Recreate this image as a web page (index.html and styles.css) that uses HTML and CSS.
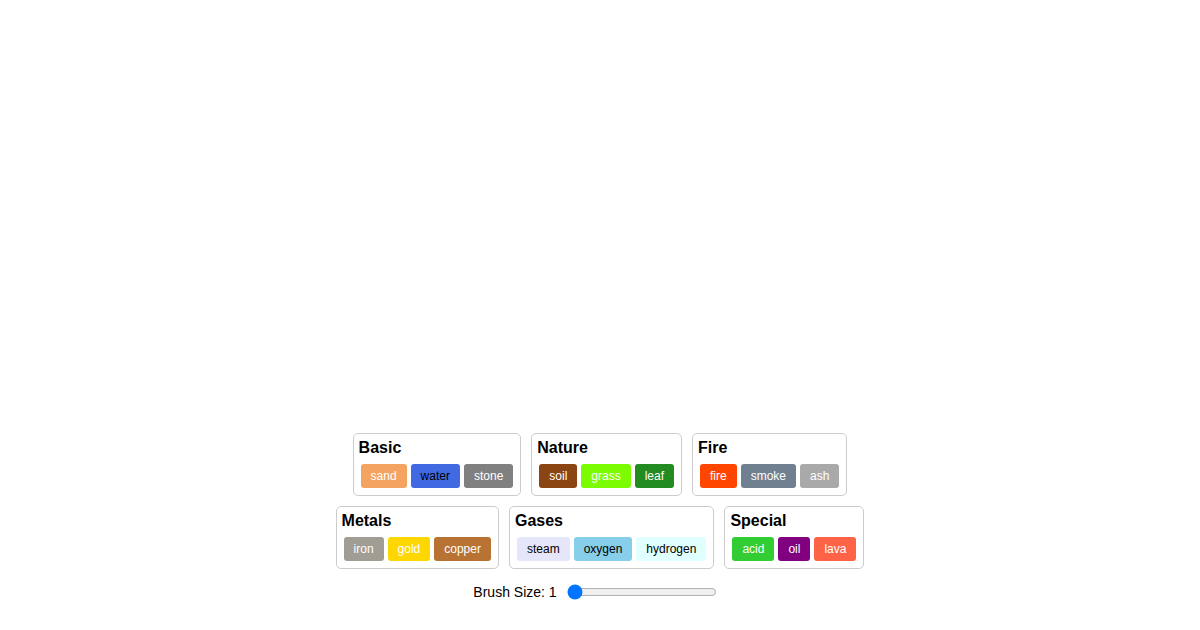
FILE: index.html
```html
<!DOCTYPE html>
<html lang="en">
<head>
<meta charset="utf-8">
<title>Falling Sand</title>
<link rel="stylesheet" href="styles.css">
</head>
<body>
<canvas class="stage"></canvas>
<div class="controls">
  <div class="group">
    <h3 class="group-title">Basic</h3>
    <div class="buttons">
      <button class="el el-sand">sand</button>
      <button class="el el-water">water</button>
      <button class="el el-stone">stone</button>
    </div>
  </div>
  <div class="group">
    <h3 class="group-title">Nature</h3>
    <div class="buttons">
      <button class="el el-soil">soil</button>
      <button class="el el-grass">grass</button>
      <button class="el el-leaf">leaf</button>
    </div>
  </div>
  <div class="group">
    <h3 class="group-title">Fire</h3>
    <div class="buttons">
      <button class="el el-fire">fire</button>
      <button class="el el-smoke">smoke</button>
      <button class="el el-ash">ash</button>
    </div>
  </div>
  <div class="group">
    <h3 class="group-title">Metals</h3>
    <div class="buttons">
      <button class="el el-iron">iron</button>
      <button class="el el-gold">gold</button>
      <button class="el el-copper">copper</button>
    </div>
  </div>
  <div class="group">
    <h3 class="group-title">Gases</h3>
    <div class="buttons">
      <button class="el el-steam">steam</button>
      <button class="el el-oxygen">oxygen</button>
      <button class="el el-hydrogen">hydrogen</button>
    </div>
  </div>
  <div class="group">
    <h3 class="group-title">Special</h3>
    <div class="buttons">
      <button class="el el-acid">acid</button>
      <button class="el el-oil">oil</button>
      <button class="el el-lava">lava</button>
    </div>
  </div>
</div>
<div class="brush">
  <label class="brush-label" for="brush">Brush Size: <span>1</span></label>
  <input class="brush-range" id="brush" type="range" min="1" max="10" value="1">
</div>
</body>
</html>
```

FILE: styles.css
```css
html, body {
  margin: 0;
  padding: 0;
  background: #fff;
  font-family: "Liberation Sans", Arial, sans-serif;
  color: #000;
}

.stage {
  display: block;
  width: 1200px;
  height: 433px;
  background: #fff;
}

.controls {
  width: 600px;
  margin: 0 auto;
  display: flex;
  flex-wrap: wrap;
  justify-content: center;
  gap: 10px;
}

.group {
  border: 1px solid #ccc;
  border-radius: 5px;
  padding: 5px;
}

.group-title {
  margin: 0 0 5px 0;
  font-size: 16px;
  font-weight: bold;
  line-height: 18px;
}

.buttons {
  display: flex;
}

.el {
  margin: 2px;
  padding: 0 10px;
  height: 24px;
  border: none;
  border-radius: 3px;
  font-family: "Liberation Sans", Arial, sans-serif;
  font-size: 12px;
  color: #fff;
  cursor: pointer;
}

.el-sand { background: #f4a460; }
.el-water { background: #4169e1; color: #000; }
.el-stone { background: #808080; }
.el-soil { background: #8b4513; }
.el-grass { background: #7cfc00; }
.el-leaf { background: #228b22; }
.el-fire { background: #ff4500; }
.el-smoke { background: #708090; }
.el-ash { background: #a9a9a9; }
.el-iron { background: #a19d94; }
.el-gold { background: #ffd700; }
.el-copper { background: #b87333; }
.el-steam { background: #e6e6fa; color: #000; }
.el-oxygen { background: #87ceeb; color: #000; }
.el-hydrogen { background: #e0ffff; color: #000; }
.el-acid { background: #32cd32; }
.el-oil { background: #800080; }
.el-lava { background: #ff6347; }

.brush {
  display: flex;
  justify-content: center;
  align-items: center;
  gap: 8px;
  margin-top: 13px;
  padding-right: 8px;
}

.brush-label {
  font-size: 14px;
}

.brush-range {
  width: 150px;
  margin: 2px;
}
```
